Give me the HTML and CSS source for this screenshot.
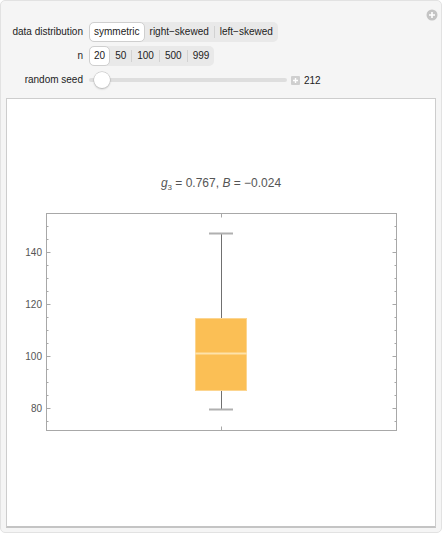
FILE: index.html
```html
<!DOCTYPE html>
<html>
<head>
<meta charset="utf-8">
<link rel="stylesheet" href="styles.css">
</head>
<body>
<div class="panel">
  <svg class="corner-plus" width="12" height="12" viewBox="0 0 12 12">
    <circle cx="6" cy="6" r="5.5" fill="#c4c4c4"/>
    <path d="M6 3v6M3 6h6" stroke="#fff" stroke-width="1.6"/>
  </svg>
  <div class="controls">
    <span class="label">data distribution</span>
    <div class="seg">
      <span class="item sel">symmetric</span>
      <span class="item">right−skewed</span>
      <span class="item sep">left−skewed</span>
    </div>
    <span class="label">n</span>
    <div class="seg">
      <span class="item sel num">20</span>
      <span class="item num">50</span>
      <span class="item num sep">100</span>
      <span class="item num sep">500</span>
      <span class="item num sep">999</span>
    </div>
    <span class="label">random seed</span>
    <div class="slider-row">
      <div class="track"><div class="thumb"></div></div>
      <svg class="mini-plus" width="9" height="9" viewBox="0 0 9 9">
        <rect width="9" height="9" rx="1" fill="#cfcfcf"/>
        <path d="M4.5 2v5M2 4.5h5" stroke="#fff" stroke-width="1.4"/>
      </svg>
      <span class="value">212</span>
    </div>
  </div>
  <div class="plot">
    <svg width="428" height="428" viewBox="7 99 428 428">
      <text x="221" y="187" text-anchor="middle" class="title"><tspan font-style="italic">g</tspan><tspan font-size="8" dy="3">3</tspan><tspan dy="-3"> = 0.767, </tspan><tspan font-style="italic">B</tspan> = −0.024</text>
      <rect x="46.5" y="213.5" width="350" height="217" fill="none" stroke="#a8a8a8"/>
      <g stroke="#a8a8a8">
        <path d="M46.5 408.5h4M46.5 356.5h4M46.5 304.5h4M46.5 252.5h4"/>
        <path d="M46.5 421.5h2M46.5 395.5h2M46.5 382.5h2M46.5 369.5h2M46.5 343.5h2M46.5 330.5h2M46.5 317.5h2M46.5 291.5h2M46.5 278.5h2M46.5 265.5h2M46.5 239.5h2M46.5 226.5h2"/>
        <path d="M396.5 408.5h-4M396.5 356.5h-4M396.5 304.5h-4M396.5 252.5h-4"/>
        <path d="M396.5 421.5h-2M396.5 395.5h-2M396.5 382.5h-2M396.5 369.5h-2M396.5 343.5h-2M396.5 330.5h-2M396.5 317.5h-2M396.5 291.5h-2M396.5 278.5h-2M396.5 265.5h-2M396.5 239.5h-2M396.5 226.5h-2"/>
        <path d="M221.5 213.5v4M221.5 430.5v-4"/>
      </g>
      <g class="ylab" text-anchor="end">
        <text x="42" y="412">80</text>
        <text x="42" y="360">100</text>
        <text x="42" y="308">120</text>
        <text x="42" y="256">140</text>
      </g>
      <path d="M221.5 233v85M221.5 391v19" stroke="#707070"/>
      <path d="M209 233.5h24M209 409.5h24" stroke="#b0b0b0" stroke-width="2"/>
      <rect x="195" y="318" width="52" height="73" fill="#fbbf55"/>
      <rect x="195.5" y="318.5" width="51" height="72" fill="none" stroke="#fcd590" stroke-width="1"/>
      <path d="M195 353.5h52" stroke="#fde2aa" stroke-width="2"/>
    </svg>
  </div>
</div>
</body>
</html>
```

FILE: styles.css
```css
* { box-sizing: border-box; }
html, body { margin: 0; padding: 0; background: #ffffff; }
body {
  font-family: "Liberation Sans", Arial, sans-serif;
  font-size: 10px;
  color: #222;
}
.panel {
  position: relative;
  width: 442px;
  height: 533px;
  background: #f5f5f5;
  border: 1px solid #e2e2e2;
  border-radius: 5px;
  padding: 21px 5px 0 5px;
}
.corner-plus {
  position: absolute;
  top: 8px;
  right: 3px;
}
.controls {
  display: grid;
  grid-template-columns: 77px auto;
  column-gap: 6px;
  row-gap: 4px;
  align-items: center;
  justify-items: start;
}
.label {
  justify-self: end;
  color: #222;
  line-height: 20px;
}
.seg {
  display: flex;
  align-items: center;
  height: 20px;
  background: #e9e9e9;
  border-radius: 5px;
}
.item {
  position: relative;
  height: 20px;
  line-height: 20px;
  padding: 0 5px;
  color: #222;
}
.item.sel {
  background: #ffffff;
  border: 1px solid #cfcfcf;
  border-radius: 5px;
  line-height: 18px;
  padding: 0 4px;
}
.item.sep { border-left: 1px solid transparent; }
.item.sep::before {
  content: "";
  position: absolute;
  left: -1px;
  top: 4px;
  height: 12px;
  border-left: 1px solid #d2d2d2;
}
.slider-row {
  display: flex;
  align-items: center;
  height: 20px;
}
.track {
  position: relative;
  width: 198px;
  height: 4px;
  border-radius: 2px;
  background: #dedede;
}
.thumb {
  position: absolute;
  left: 5px;
  top: -6px;
  width: 16px;
  height: 16px;
  border-radius: 50%;
  background: #ffffff;
  box-shadow: 0 0 0 0.5px #bdbdbd, 0 1px 2px rgba(0,0,0,0.25);
}
.mini-plus { margin-left: 4px; }
.value { margin-left: 4px; color: #222; }
.plot {
  margin-top: 8px;
  width: 430px;
  height: 430px;
  background: #ffffff;
  border: 1px solid #cdcdcd;
  border-bottom: 2px solid #c4c4c4;
}
.plot svg { display: block; }
.title {
  font-family: "Liberation Sans", Arial, sans-serif;
  font-size: 12px;
  fill: #555;
}
.ylab text {
  font-family: "Liberation Sans", Arial, sans-serif;
  font-size: 10px;
  fill: #555;
}
```
